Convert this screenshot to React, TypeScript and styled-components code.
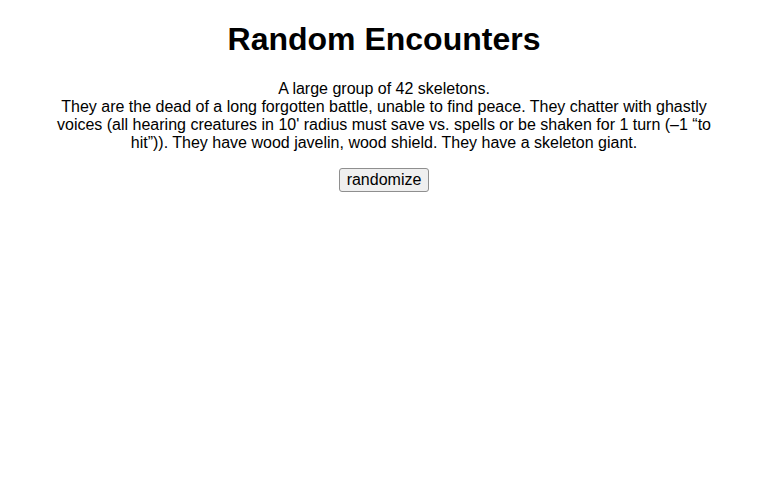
import React, { useState } from "react";
import styled, { createGlobalStyle } from "styled-components";

const GlobalStyle = createGlobalStyle`
  body {
    margin: 0;
    padding: 8px;
    background: #ffffff;
    color: #000000;
    font-family: "Liberation Sans", Arial, sans-serif;
  }
`;

const Page = styled.div`
  display: flex;
  flex-direction: column;
  align-items: center;
  text-align: center;
`;

const Title = styled.h1`
  font-size: 32px;
  font-weight: 700;
  margin: 13px 0 22px;
`;

const Description = styled.div`
  max-width: 680px;
  font-size: 16px;
  line-height: 18px;
`;

const Button = styled.button`
  margin-top: 16px;
  font-family: "Liberation Sans", Arial, sans-serif;
  font-size: 16px;
  line-height: 18px;
  padding: 2px 7px;
  background: #efefef;
  border: 1px solid #8f8f8f;
  border-radius: 3px;
  color: #000000;
  cursor: pointer;
`;

function App() {
  const [count] = useState(42);

  return (
    <>
      <GlobalStyle />
      <Page>
        <Title>Random Encounters</Title>
        <Description>
          A large group of {count} skeletons.
          <br />
          They are the dead of a long forgotten battle, unable to find peace.
          They chatter with ghastly voices (all hearing creatures in 10' radius
          must save vs. spells or be shaken for 1 turn (–1 “to hit”)). They have
          wood javelin, wood shield. They have a skeleton giant.
        </Description>
        <Button>randomize</Button>
      </Page>
    </>
  );
}

export default App;
